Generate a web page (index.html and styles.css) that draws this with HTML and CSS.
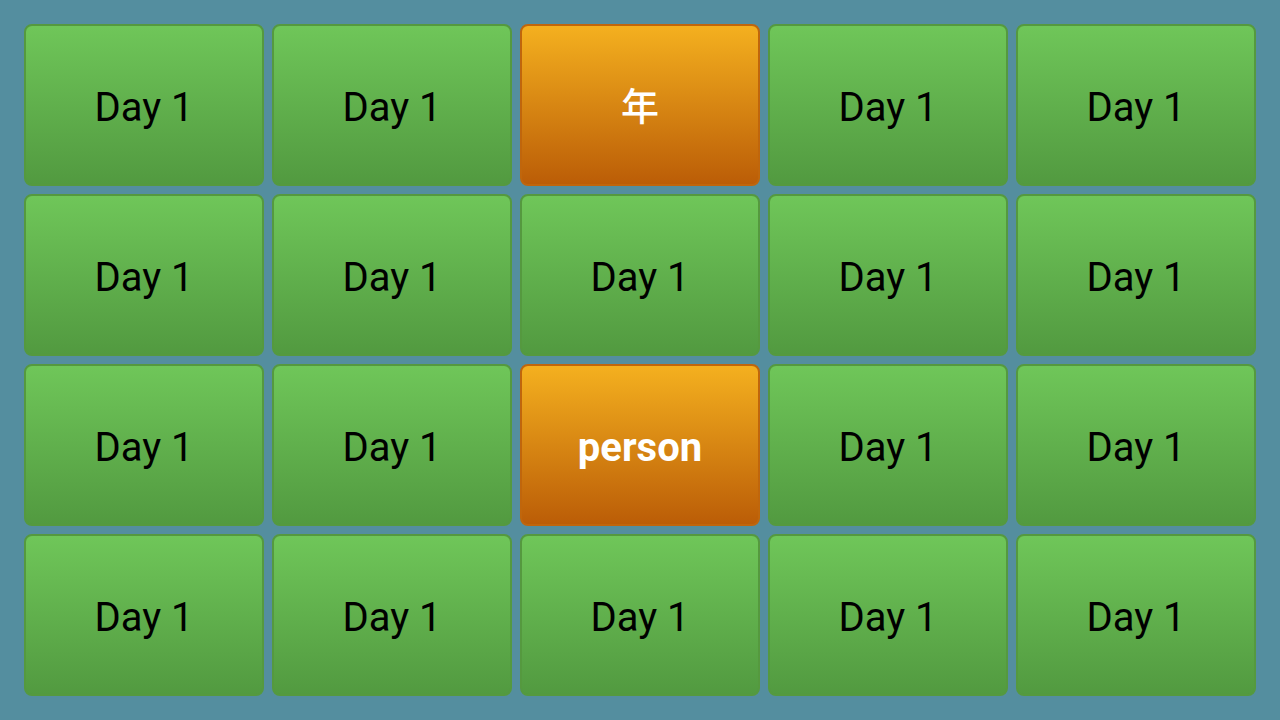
FILE: index.html
```html
<!DOCTYPE html>
<html>
<head>
<meta charset="utf-8">
<link rel="stylesheet" href="styles.css">
</head>
<body>
<div class="grid">
  <div class="cell">Day 1</div>
  <div class="cell">Day 1</div>
  <div class="cell hl cjk">年</div>
  <div class="cell">Day 1</div>
  <div class="cell">Day 1</div>
  <div class="cell">Day 1</div>
  <div class="cell">Day 1</div>
  <div class="cell">Day 1</div>
  <div class="cell">Day 1</div>
  <div class="cell">Day 1</div>
  <div class="cell">Day 1</div>
  <div class="cell">Day 1</div>
  <div class="cell hl">person</div>
  <div class="cell">Day 1</div>
  <div class="cell">Day 1</div>
  <div class="cell">Day 1</div>
  <div class="cell">Day 1</div>
  <div class="cell">Day 1</div>
  <div class="cell">Day 1</div>
  <div class="cell">Day 1</div>
</div>
</body>
</html>
```
FILE: styles.css
```css
html, body {
  margin: 0;
  padding: 0;
  width: 1280px;
  height: 720px;
  overflow: hidden;
  background: #548e9f;
  font-family: Roboto, "Noto Sans CJK SC", sans-serif;
}
.grid {
  box-sizing: border-box;
  width: 1280px;
  height: 720px;
  padding: 24px;
  display: grid;
  grid-template-columns: repeat(5, 240px);
  grid-template-rows: repeat(4, 162px);
  gap: 8px;
}
.cell {
  box-sizing: border-box;
  border: 2px solid #55993f;
  border-radius: 8px;
  background: linear-gradient(to bottom, #6fc659, #529a40);
  display: flex;
  align-items: center;
  justify-content: center;
  font-size: 40px;
  color: #000;
  padding-top: 4px;
}
.cell.hl {
  border-color: #c0660c;
  background: linear-gradient(to bottom, #f4b01f, #bb5d07);
  color: #fff;
  font-weight: bold;
}
.cell.cjk {
  font-family: "Noto Sans CJK SC", sans-serif;
  font-size: 38px;
  font-weight: 500;
  padding-top: 0;
  padding-bottom: 3px;
}
```
